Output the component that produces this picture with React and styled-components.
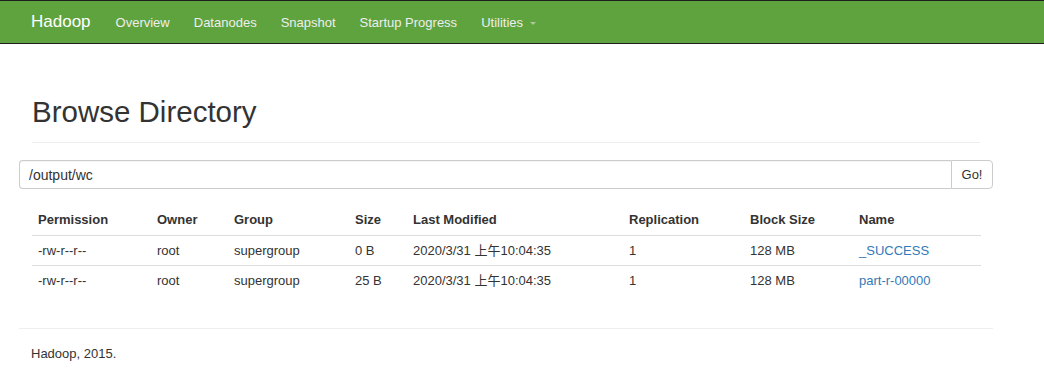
import styled, { createGlobalStyle } from "styled-components";

const GlobalStyle = createGlobalStyle`
  body {
    margin: 0;
    background: #fff;
    color: #333;
    font-family: "Liberation Sans", "Noto Sans CJK SC", sans-serif;
    font-size: 13px;
  }
`;

const Navbar = styled.nav`
  height: 42px;
  background-color: #5fa33e;
  border-top: 1px solid #1f1f1f;
  border-bottom: 1px solid #1f1f1f;
  display: flex;
  align-items: center;
  padding-left: 31px;
`;

const Brand = styled.a`
  color: #fff;
  font-size: 17px;
  margin-right: 13px;
  text-decoration: none;
`;

const NavLink = styled.a`
  color: #eee;
  font-size: 13px;
  padding: 0 12px;
  text-decoration: none;
  display: flex;
  align-items: center;
`;

const Caret = styled.span`
  display: inline-block;
  margin-left: 7px;
  margin-top: 2px;
  border-top: 3px solid #a9c99a;
  border-left: 3px solid transparent;
  border-right: 3px solid transparent;
`;

const Container = styled.div`
  width: 974px;
  margin-left: 19px;
`;

const PageHeader = styled.div`
  margin: 51px 13px 0;
  padding-bottom: 14px;
  border-bottom: 1px solid #eee;
`;

const Title = styled.h1`
  margin: 0;
  font-family: "Liberation Sans", sans-serif;
  font-size: 29.5px;
  font-weight: 400;
  line-height: 33px;
  color: #333;
`;

const InputGroup = styled.form`
  display: flex;
  margin-top: 17px;
  height: 29px;
`;

const PathInput = styled.input`
  flex: 1;
  box-sizing: border-box;
  height: 29px;
  padding: 0 9px;
  border: 1px solid #ccc;
  border-right: none;
  border-radius: 4px 0 0 4px;
  font-family: inherit;
  font-size: 14px;
  color: #333;
  outline: none;
  box-shadow: inset 0 1px 1px rgba(0, 0, 0, 0.05);
`;

const GoButton = styled.button`
  width: 42px;
  height: 29px;
  border: 1px solid #ccc;
  border-radius: 0 4px 4px 0;
  background: #fff;
  font-family: inherit;
  font-size: 13px;
  color: #333;
  padding: 0;
`;

const Table = styled.table`
  width: 949px;
  margin: 16px 13px 0;
  border-collapse: collapse;
  table-layout: fixed;
`;

const Th = styled.th`
  text-align: left;
  font-weight: 700;
  height: 30px;
  padding: 0 6px;
  line-height: 16px;
  vertical-align: middle;
`;

const Td = styled.td`
  height: 29px;
  padding: 0 6px;
  line-height: 16px;
  border-top: 1px solid #ddd;
  vertical-align: middle;
  white-space: nowrap;
`;

const FileLink = styled.a`
  color: #337ab7;
  text-decoration: none;
`;

const Footer = styled.footer`
  margin-top: 33px;
  border-top: 1px solid #eee;
  padding: 17px 12px;
  font-size: 13px;
  line-height: 16px;
`;

const cols = [119, 77, 121, 58, 216, 121, 109, 128];
const headers = ["Permission", "Owner", "Group", "Size", "Last Modified", "Replication", "Block Size", "Name"];

const files = [
  { perm: "-rw-r--r--", owner: "root", group: "supergroup", size: "0 B", modified: "2020/3/31 上午10:04:35", repl: "1", block: "128 MB", name: "_SUCCESS" },
  { perm: "-rw-r--r--", owner: "root", group: "supergroup", size: "25 B", modified: "2020/3/31 上午10:04:35", repl: "1", block: "128 MB", name: "part-r-00000" },
];

export default function App() {
  return (
    <>
      <GlobalStyle />
      <Navbar>
        <Brand href="#">Hadoop</Brand>
        <NavLink href="#">Overview</NavLink>
        <NavLink href="#">Datanodes</NavLink>
        <NavLink href="#">Snapshot</NavLink>
        <NavLink href="#">Startup Progress</NavLink>
        <NavLink href="#">
          Utilities<Caret />
        </NavLink>
      </Navbar>
      <Container>
        <PageHeader>
          <Title>Browse Directory</Title>
        </PageHeader>
        <InputGroup onSubmit={(e) => e.preventDefault()}>
          <PathInput defaultValue="/output/wc" />
          <GoButton type="submit">Go!</GoButton>
        </InputGroup>
        <Table>
          <colgroup>
            {cols.map((w, i) => (
              <col key={i} style={{ width: w }} />
            ))}
          </colgroup>
          <thead>
            <tr>
              {headers.map((h) => (
                <Th key={h}>{h}</Th>
              ))}
            </tr>
          </thead>
          <tbody>
            {files.map((f) => (
              <tr key={f.name}>
                <Td>{f.perm}</Td>
                <Td>{f.owner}</Td>
                <Td>{f.group}</Td>
                <Td>{f.size}</Td>
                <Td>{f.modified}</Td>
                <Td>{f.repl}</Td>
                <Td>{f.block}</Td>
                <Td>
                  <FileLink href="#">{f.name}</FileLink>
                </Td>
              </tr>
            ))}
          </tbody>
        </Table>
        <Footer>Hadoop, 2015.</Footer>
      </Container>
    </>
  );
}
